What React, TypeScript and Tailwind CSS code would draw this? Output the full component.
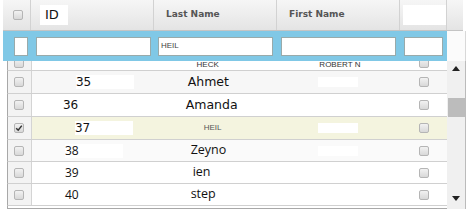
import React from 'react'

type Row = { id: string; last: string; idX: string; lastX: string; bg: string; h: string; checked?: boolean; small?: boolean; font?: string }

const rows: Row[] = [
  { id: '35', last: 'Ahmet', idX: 'pl-[44px]', lastX: 'pl-[33px]', bg: 'bg-[#f7f7f7]', h: 'h-[23px]' },
  { id: '36', last: 'Amanda', idX: 'pl-[31px]', lastX: 'pl-[31px]', bg: 'bg-white', h: 'h-[23px]' },
  { id: '37', last: 'HEIL', idX: 'pl-[43px]', lastX: 'pl-[49px]', bg: 'bg-[#f4f4df]', h: 'h-[23px]', checked: true, small: true },
  { id: '38', last: 'Zeyno', idX: 'pl-[33px]', lastX: 'pl-[36px]', bg: 'bg-[#fafafa]', h: 'h-[22px]', font: 'open' },
  { id: '39', last: 'ien', idX: 'pl-[33px]', lastX: 'pl-[38px]', bg: 'bg-white', h: 'h-[22px]', font: 'open' },
  { id: '40', last: 'step', idX: 'pl-[33px]', lastX: 'pl-[36px]', bg: 'bg-white', h: 'h-[22px]', font: 'open' },
]

function Box({ checked }: { checked?: boolean }) {
  return (
    <span className="flex h-[10px] w-[10px] items-center justify-center rounded-[2px] border border-[#b5b5b5] bg-gradient-to-b from-[#f2f2f2] to-[#d8d8d8]">
      {checked && (
        <svg width="8" height="8" viewBox="0 0 8 8">
          <path d="M1.2 4.2 L3.2 6.2 L6.8 1.6" fill="none" stroke="#333" strokeWidth="1.5" />
        </svg>
      )}
    </span>
  )
}

export default function App() {
  return (
    <div className="relative h-[215px] w-[474px] overflow-hidden bg-white font-['DejaVu_Sans',sans-serif]">
      {/* header */}
      <div className="ml-[3px] flex h-[31px] w-[460px] border-b border-[#c4c4c4] bg-gradient-to-b from-[#f6f6f6] to-[#e4e4e4]">
        <div className="flex w-[28px] items-center justify-center border-r border-[#d2d2d2] pl-[2px]">
          <Box />
        </div>
        <div className="flex w-[123px] items-center border-r border-[#d2d2d2] pl-[9px]">
          <span className="flex h-[20px] w-[28px] items-center bg-white pl-[5px] text-[13px] text-[#111]">ID</span>
        </div>
        <div className="flex w-[123px] items-start border-r border-[#d2d2d2] pl-[12px] pt-[8px] text-[9px] font-bold text-[#555]">Last Name</div>
        <div className="flex w-[123px] items-start border-r border-[#d2d2d2] pl-[12px] pt-[8px] text-[9px] font-bold text-[#555]">First Name</div>
        <div className="flex w-[47px] items-center border-r border-[#d2d2d2] pl-[3px]">
          <span className="h-[20px] w-[44px] bg-white" />
        </div>
        <div className="flex-1" />
      </div>

      {/* filter row */}
      <div className="ml-[3px] flex h-[30px] w-[463px]">
        <div className="flex w-[444px] items-center bg-[#80c8e6]">
          <div className="flex w-[28px] justify-end pr-[3px]">
            <span className="h-[19px] w-[14px] border border-[#9aa] bg-white" />
          </div>
          <div className="flex w-[123px] justify-center pl-[2px]">
            <span className="h-[19px] w-[115px] border border-[#9aa] bg-white" />
          </div>
          <div className="flex w-[123px] justify-center">
            <span className="flex h-[19px] w-[115px] items-center border border-[#9aa] bg-white pl-[2px] font-['Liberation_Sans',sans-serif] text-[8px] text-[#444]">HEIL</span>
          </div>
          <div className="flex w-[123px] justify-center">
            <span className="h-[19px] w-[115px] border border-[#9aa] bg-white" />
          </div>
          <div className="flex w-[47px] justify-center">
            <span className="h-[19px] w-[39px] border border-[#9aa] bg-white" />
          </div>
        </div>
        <div className="flex-1 border-r border-[#d8d8d8] bg-[#fbfbfb]" />
      </div>

      <div className="ml-[7px] flex w-[459px]">
        <div className="w-[440px]">
          {/* partial row */}
          <div className="flex h-[10px] overflow-hidden border-b border-[#d0d0d0] border-l border-l-[#a8a8a8]">
            <div className="flex w-[24px] items-end justify-center border-r border-[#d4d4d4] bg-[#f3f3f3]">
              <span className="mb-[2px]"><Box /></span>
            </div>
            <div className="w-[123px]" />
            <div className="w-[123px] pl-[42px] font-['Liberation_Sans',sans-serif] text-[8px] leading-[8px] text-[#333]">HECK</div>
            <div className="w-[123px] pl-[42px] font-['Liberation_Sans',sans-serif] text-[8px] leading-[8px] text-[#333]">ROBERT N</div>
            <div className="flex w-[47px] items-end justify-center">
              <span className="mb-[2px]"><Box /></span>
            </div>
          </div>

          {rows.map((r) => (
            <div key={r.id} className={`flex ${r.h} border-b border-[#d0d0d0] border-l border-l-[#a8a8a8] ${r.bg}`}>
              <div className="flex w-[24px] items-center justify-center border-r border-[#d4d4d4] bg-[#f3f3f3]">
                <Box checked={r.checked} />
              </div>
              <div className={`flex w-[123px] items-center ${r.idX}`}>
                <span className={`flex h-[14px] w-[58px] items-center bg-white text-[12px] text-[#111] ${r.font === 'open' ? "font-['Open_Sans',sans-serif]" : ''}`}>{r.id}</span>
              </div>
              <div className={`flex w-[123px] items-center ${r.lastX}`}>
                <span className={r.small ? "font-['Liberation_Sans',sans-serif] text-[8px] text-[#555]" : `text-[12.5px] text-[#111] ${r.font === 'open' ? "font-['Open_Sans',sans-serif]" : ''}`}>{r.last}</span>
              </div>
              <div className="flex w-[123px] items-center pl-[41px]">
                <span className="h-[10px] w-[40px] bg-white" />
              </div>
              <div className="flex w-[47px] items-center justify-center">
                <Box />
              </div>
            </div>
          ))}
          <div className="h-[3px] border-b border-[#a8a8a8] border-l border-l-[#a8a8a8]" />
        </div>

        {/* scrollbar */}
        <div className="flex w-[19px] flex-col items-center border-r border-[#bbb] bg-[#f0f0f0]">
          <svg width="8" height="5" viewBox="0 0 8 5" className="mt-[5px]">
            <path d="M0 5 L4 0 L8 5 Z" fill="#222" />
          </svg>
          <div className="mt-[27px] h-[19px] w-[17px] bg-[#bcbcbc]" />
          <div className="flex-1" />
          <svg width="8" height="5" viewBox="0 0 8 5" className="mb-[8px]">
            <path d="M0 0 L4 5 L8 0 Z" fill="#222" />
          </svg>
        </div>
      </div>
    </div>
  )
}
